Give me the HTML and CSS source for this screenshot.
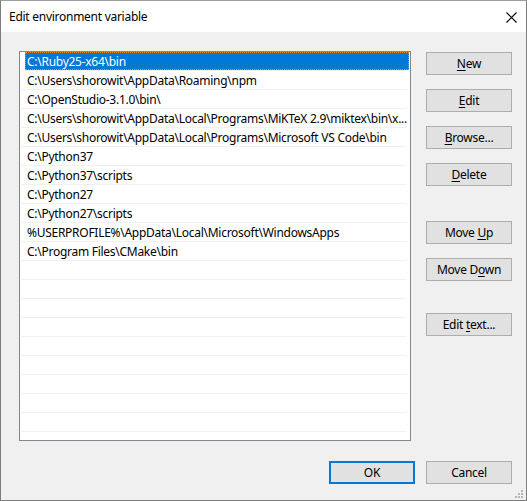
FILE: index.html
```html
<!DOCTYPE html>
<html lang="en">
<head>
<meta charset="utf-8">
<title>Edit environment variable</title>
<link rel="stylesheet" href="styles.css">
</head>
<body>
<div class="window">
  <div class="titlebar">
    <span class="title">Edit environment variable</span>
    <span class="close" aria-label="Close">
      <svg width="11" height="11" viewBox="0 0 11 11"><path d="M0.5 0.5 L10.5 10.5 M10.5 0.5 L0.5 10.5" stroke="#000" stroke-width="1.1" fill="none"/></svg>
    </span>
  </div>
  <div class="content">
    <div class="main">
      <div class="list">
        <div class="row sel"><span class="cell">C:\Ruby25-x64\bin</span></div>
        <div class="row"><span class="cell">C:\Users\shorowit\AppData\Roaming\npm</span></div>
        <div class="row"><span class="cell">C:\OpenStudio-3.1.0\bin\</span></div>
        <div class="row"><span class="cell">C:\Users\shorowit\AppData\Local\Programs\MiKTeX 2.9\miktex\bin\x...</span></div>
        <div class="row"><span class="cell">C:\Users\shorowit\AppData\Local\Programs\Microsoft VS Code\bin</span></div>
        <div class="row"><span class="cell">C:\Python37</span></div>
        <div class="row"><span class="cell">C:\Python37\scripts</span></div>
        <div class="row"><span class="cell">C:\Python27</span></div>
        <div class="row"><span class="cell">C:\Python27\scripts</span></div>
        <div class="row"><span class="cell">%USERPROFILE%\AppData\Local\Microsoft\WindowsApps</span></div>
        <div class="row"><span class="cell">C:\Program Files\CMake\bin</span></div>
        <div class="row"></div>
        <div class="row"></div>
        <div class="row"></div>
        <div class="row"></div>
        <div class="row"></div>
        <div class="row"></div>
        <div class="row"></div>
        <div class="row"></div>
        <div class="row"></div>
        <div class="row"></div>
      </div>
      <div class="side">
        <button class="btn"><u>N</u>ew</button>
        <button class="btn gap-s"><u>E</u>dit</button>
        <button class="btn gap-s"><u>B</u>rowse...</button>
        <button class="btn gap-s"><u>D</u>elete</button>
        <button class="btn gap-l">Move <u>U</u>p</button>
        <button class="btn gap-s">Move D<u>o</u>wn</button>
        <button class="btn gap-m">Edit <u>t</u>ext...</button>
      </div>
    </div>
    <div class="footer">
      <button class="btn default">OK</button>
      <button class="btn">Cancel</button>
    </div>
    <svg class="grip" width="9" height="9" viewBox="0 0 9 9">
      <rect x="6" y="0" width="2" height="2" fill="#b8b8b8"/>
      <rect x="3" y="3" width="2" height="2" fill="#b8b8b8"/>
      <rect x="6" y="3" width="2" height="2" fill="#b8b8b8"/>
      <rect x="0" y="6" width="2" height="2" fill="#b8b8b8"/>
      <rect x="3" y="6" width="2" height="2" fill="#b8b8b8"/>
      <rect x="6" y="6" width="2" height="2" fill="#b8b8b8"/>
    </svg>
  </div>
</div>
</body>
</html>
```
FILE: styles.css
```css
html, body {
  margin: 0;
  padding: 0;
  background: #f0f0f0;
}

body {
  font-family: "Noto Sans", "Open Sans", "DejaVu Sans", sans-serif;
  font-size: 12px;
  letter-spacing: -0.27px;
  color: #000;
}

.window {
  width: 527px;
  height: 501px;
  box-sizing: border-box;
  border: 1px solid #7d7d7d;
  border-top-color: #a0a0a0;
  background: #f0f0f0;
  display: flex;
  flex-direction: column;
}

.titlebar {
  height: 31px;
  background: #fff;
  display: flex;
  align-items: center;
  justify-content: space-between;
  padding: 0 9px 0 8px;
  flex: none;
}

.title {
  font-size: 12px;
  line-height: 16px;
  margin-top: 1px;
}

.close {
  display: flex;
  width: 11px;
  height: 11px;
  margin-top: 1px;
}

.content {
  flex: 1;
  position: relative;
  padding: 19px 14px 0 18px;
}

.main {
  display: flex;
  gap: 15px;
}

.list {
  width: 392px;
  height: 390px;
  box-sizing: border-box;
  border: 1px solid #828790;
  background: #fff;
  overflow: hidden;
}

.row {
  height: 19px;
  padding: 0 1px 0 5px;
  background: linear-gradient(#f0f0f0, #f0f0f0) 1px 100% / calc(100% - 5px) 1px no-repeat;
  white-space: nowrap;
}

.cell {
  display: block;
  height: 18px;
  line-height: 19px;
  padding-left: 2px;
  overflow: hidden;
  white-space: nowrap;
}

.row.sel .cell {
  background: #0078d7;
  color: #fff;
  outline: 1px dotted #f0871c;
  outline-offset: -1px;
}

.side {
  display: flex;
  flex-direction: column;
  padding-top: 1px;
}

.btn {
  width: 86px;
  height: 23px;
  box-sizing: border-box;
  border: 1px solid #adadad;
  background: #e1e1e1;
  font-family: inherit;
  font-size: 12px;
  letter-spacing: inherit;
  color: #000;
  padding: 0;
  margin: 0;
  line-height: 18px;
}

.btn u {
  text-underline-offset: 2px;
}

.gap-s { margin-top: 14px; }
.gap-l { margin-top: 35px; }
.gap-m { margin-top: 32px; }

.btn.default {
  border: 2px solid #0078d7;
}

.footer {
  display: flex;
  justify-content: flex-end;
  gap: 11px;
  margin-top: 20px;
}

.grip {
  position: absolute;
  right: 2px;
  bottom: 1px;
}
```
